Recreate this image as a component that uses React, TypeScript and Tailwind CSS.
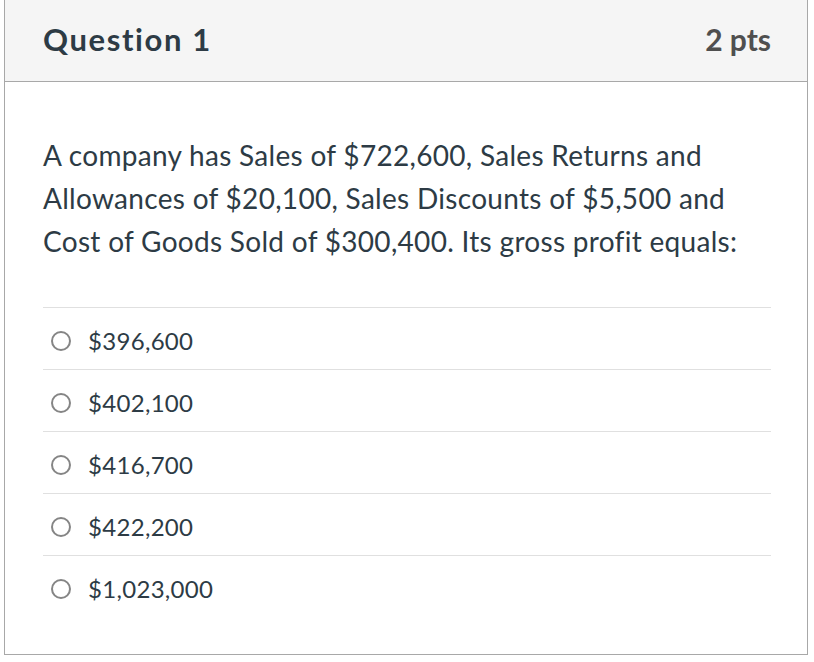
import React from "react";

const answers = ["$396,600", "$402,100", "$416,700", "$422,200", "$1,023,000"];

export default function App() {
  return (
    <div className="w-[814px] h-[662px] bg-white pl-[4px] pr-[6px] pb-[7px]" style={{ fontFamily: "Lato, 'Noto Sans', sans-serif" }}>
      <div className="h-full border-x border-b border-[#a8a8a8] flex flex-col text-[#2d3b45]">
        <div className="h-[82px] bg-[#f5f5f5] border-b border-[#a8a8a8] flex items-center justify-between pl-[38px] pr-[36px] pb-[2px]">
          <span className="text-[31px] font-bold tracking-[1.6px]">Question 1</span>
          <span className="text-[30px] font-bold text-[#4f4f4f]">2 pts</span>
        </div>
        <div className="pl-[38px] pr-[36px] pt-[52px]">
          <p className="text-[28px] leading-[43px] tracking-[0.3px]">
            A company has Sales of $722,600, Sales Returns and Allowances of $20,100, Sales Discounts of $5,500 and Cost of Goods Sold of $300,400. Its gross profit equals:
          </p>
          <div className="mt-[44px] border-t border-[#e0e0e0]">
            {answers.map((a, i) => (
              <div key={a} className={`h-[62px] pt-[4px] flex items-center ${i < answers.length - 1 ? "border-b border-[#e0e0e0]" : ""}`}>
                <span className="ml-[8px] w-[20px] h-[20px] rounded-full border-[2px] border-[#858585] bg-white" />
                <span className="ml-[17px] text-[24px] tracking-[0.3px]">{a}</span>
              </div>
            ))}
          </div>
        </div>
      </div>
    </div>
  );
}
